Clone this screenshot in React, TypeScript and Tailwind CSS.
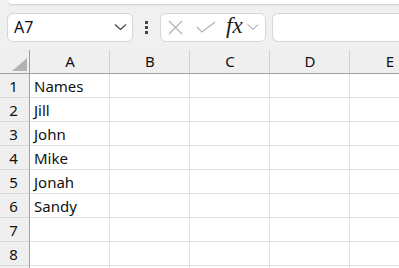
import React from "react";

const cols = ["A", "B", "C", "D", "E"];
const names = ["Names", "Jill", "John", "Mike", "Jonah", "Sandy", "", ""];

export default function App() {
  return (
    <div className="w-[399px] h-[268px] overflow-hidden bg-[#f0f0f0] font-['Noto_Sans','Open_Sans',sans-serif] text-[#111]">
      {/* ribbon bottom edge */}
      <div className="h-[4px] ml-2 bg-white rounded-bl-[6px] shadow-[0_1px_2px_rgba(0,0,0,0.15)]" />

      {/* name box + formula bar */}
      <div className="h-[46px] flex items-center pl-[7px]">
        <div className="w-[126px] h-[29px] bg-white border border-[#d6d6d6] rounded-[6px] flex items-center justify-between pl-[6px] pr-[5px]">
          <span className="text-[16px] leading-none">A7</span>
          <svg width="13" height="8" viewBox="0 0 13 8" fill="none" stroke="#444" strokeWidth="1.2">
            <path d="M1 1.5l5.5 5 5.5-5" />
          </svg>
        </div>
        <div className="w-[27px] flex flex-col items-center gap-[2px]">
          <span className="w-[3px] h-[3px] bg-[#444]" />
          <span className="w-[3px] h-[3px] bg-[#444]" />
          <span className="w-[3px] h-[3px] bg-[#444]" />
        </div>
        <div className="w-[106px] h-[29px] bg-white border border-[#d6d6d6] rounded-[6px] flex items-center pl-[7px]">
          <svg width="15" height="15" viewBox="0 0 15 15" fill="none" stroke="#b4b4b4" strokeWidth="1.3">
            <path d="M1 1l13 13M14 1L1 14" />
          </svg>
          <svg className="ml-[13px]" width="20" height="12" viewBox="0 0 20 12" fill="none" stroke="#b4b4b4" strokeWidth="1.3">
            <path d="M1 6l5 5L19 1" />
          </svg>
          <span className="ml-[10px] text-[23px] leading-none italic [font-family:'Liberation_Serif',serif] text-[#1a1a1a] -mt-[4px]">fx</span>
          <svg className="ml-[4px]" width="12" height="6" viewBox="0 0 12 6" fill="none" stroke="#888" strokeWidth="1">
            <path d="M1 0.5l5 5 5-5" />
          </svg>
        </div>
        <div className="ml-[6px] flex-1 h-[29px] bg-white border border-[#d6d6d6] border-r-0 rounded-l-[6px]" />
      </div>

      {/* sheet grid */}
      <div className="grid grid-cols-[30px_80px_80px_80px_80px_80px]">
        <div className="h-[24px] bg-[#efefef] border-b border-r border-[#9f9f9f] relative">
          <svg className="absolute left-[12px] top-[8px]" width="15" height="13" viewBox="0 0 15 13">
            <path d="M15 0L15 13L0 13Z" fill="#b3b3b3" />
          </svg>
        </div>
        {cols.map((c) => (
          <div key={c} className="h-[24px] bg-[#efefef] border-b border-[#9f9f9f] flex items-center justify-center text-[15px] relative">
            {c}
            <span className="absolute right-0 top-0 bottom-0 w-px bg-[#d0d0d0]" />
          </div>
        ))}
        {names.map((n, i) => (
          <React.Fragment key={i}>
            <div className="h-[24px] bg-[#efefef] border-r border-[#9f9f9f] border-b border-b-[#d6d6d6] flex items-center justify-center text-[15px] pr-[2px] pt-[1px]">
              {i + 1}
            </div>
            {cols.map((c) => (
              <div key={c} className="h-[24px] bg-white border-r border-b border-[#e1e1e1] flex items-center pl-[4px] pt-[1px] text-[15px] leading-none">
                {c === "A" ? n : ""}
              </div>
            ))}
          </React.Fragment>
        ))}
        <div className="h-[24px] bg-[#efefef] border-r border-[#9f9f9f]" />
        {cols.map((c) => (
          <div key={c} className="h-[24px] bg-white border-r border-[#e1e1e1]" />
        ))}
      </div>
    </div>
  );
}
